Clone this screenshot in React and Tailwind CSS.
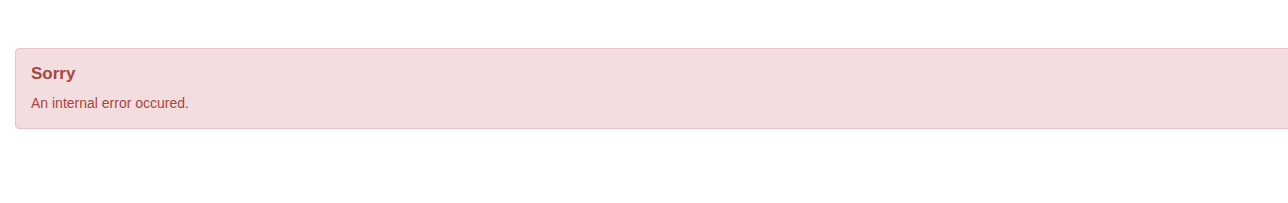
export default function App() {
  return (
    <div className="w-[1288px] h-[203px] overflow-hidden bg-white pt-[48px] pl-[15px] font-['Liberation_Sans',Arial,sans-serif]">
      <div className="w-[1320px] rounded-[4px] border border-[#e8c3cb] bg-[#f2dede] p-[15px] text-[#a94442]">
        <h4 className="text-[17px] leading-[20px] font-bold mb-[9px]">Sorry</h4>
        <p className="text-[14px] leading-[20px]">An internal error occured.</p>
      </div>
    </div>
  );
}
